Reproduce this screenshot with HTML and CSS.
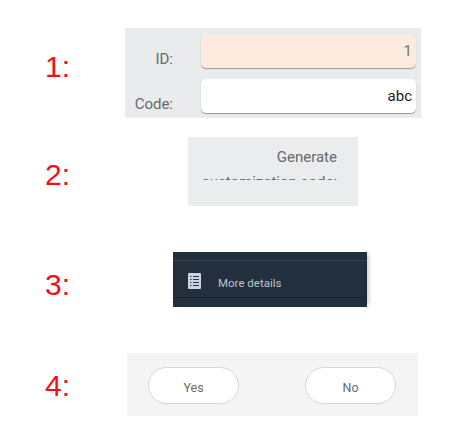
FILE: index.html
```html
<!DOCTYPE html>
<html lang="en">
<head>
    <meta charset="UTF-8">
    <title>Screens</title>
    <link rel="stylesheet" href="styles.css">
</head>
<body>
    <div class="row row-form">
        <div class="num">1:</div>
        <div class="form-panel">
            <div class="field">
                <span class="field-label">ID:</span>
                <div class="input input-id">1</div>
            </div>
            <div class="field">
                <span class="field-label">Code:</span>
                <div class="input input-code">abc</div>
            </div>
        </div>
    </div>

    <div class="row row-generate">
        <div class="num">2:</div>
        <div class="generate-panel">
            <div class="generate-text">Generate<br>customization code:</div>
        </div>
    </div>

    <div class="row row-menu">
        <div class="num">3:</div>
        <div class="menu-panel">
            <div class="menu-item">
                <svg class="menu-icon" viewBox="0 0 13 16">
                    <rect width="13" height="16" rx="1" fill="#c9d3e2"/>
                    <path d="M2 3.5h1.5M5 3.5h6M2 6.5h1.5M5 6.5h6M2 9.5h1.5M5 9.5h6M2 12.5h1.5M5 12.5h6" stroke="#2a3545" stroke-width="1.2"/>
                </svg>
                <span class="menu-label">More details</span>
            </div>
        </div>
    </div>

    <div class="row row-buttons">
        <div class="num">4:</div>
        <div class="buttons-panel">
            <button class="pill">Yes</button>
            <button class="pill">No</button>
        </div>
    </div>
</body>
</html>
```

FILE: styles.css
```css
body {
    margin: 0;
    background: white;
    font-family: Roboto, sans-serif;
}

.row {
    display: flex;
    align-items: flex-start;
}

.num {
    width: 45px;
    margin-left: 45px;
    font-family: "Liberation Sans", sans-serif;
    font-size: 30px;
    line-height: 36px;
    color: #f01018;
}

/* 1: form */
.row-form { margin-top: 28px; }
.row-form .num { margin-top: 21px; }

.form-panel {
    margin-left: 35px;
    width: 296px;
    height: 90px;
    box-sizing: border-box;
    padding: 7px 5px 0 0;
    background: #e9ebed;
    display: flex;
    flex-direction: column;
    gap: 11px;
}

.field {
    display: flex;
    align-items: flex-end;
}

.field-label {
    width: 48px;
    padding-right: 28px;
    text-align: right;
    font-size: 15px;
    line-height: 18px;
    color: #66696c;
}

.input {
    width: 215px;
    height: 33px;
    box-sizing: border-box;
    padding: 0 4px;
    text-align: right;
    font-size: 15px;
    border-radius: 5px;
    box-shadow: 0 1px 1px rgba(0, 0, 0, 0.35);
}

.input-id {
    background: #fdebdf;
    color: #77736f;
    line-height: 33px;
}

.input-code {
    height: 34px;
    background: white;
    color: #222;
    line-height: 35px;
}

/* 2: clipped button label */
.row-generate { margin-top: 19px; }
.row-generate .num { margin-top: 20px; }

.generate-panel {
    margin-left: 98px;
    width: 170px;
    height: 69px;
    box-sizing: border-box;
    padding: 8px 21px 0 0;
    background: #ebecee;
}

.generate-text {
    height: 35px;
    overflow: hidden;
    text-align: right;
    font-size: 15px;
    line-height: 25px;
    color: #66686c;
}

/* 3: dark menu */
.row-menu { margin-top: 46px; }
.row-menu .num { margin-top: 15px; }

.menu-panel {
    margin-left: 83px;
    width: 194px;
    height: 55px;
    box-sizing: border-box;
    padding-top: 8px;
    background: #232f3d;
    box-shadow: 4px 0 4px -2px rgba(0, 0, 0, 0.2);
}

.menu-item {
    height: 36px;
    display: flex;
    align-items: center;
    padding-left: 15px;
    border-top: 1px solid #35414f;
    border-bottom: 1px solid #19222d;
    font-size: 11.5px;
    color: #bcc5d0;
}

.menu-icon {
    width: 13px;
    height: 16px;
    margin-right: 17px;
    margin-top: 3px;
}

.menu-label {
    margin-top: 8px;
}

/* 4: yes / no */
.row-buttons { margin-top: 46px; }
.row-buttons .num { margin-top: 15px; }

.buttons-panel {
    margin-left: 37px;
    width: 291px;
    height: 63px;
    box-sizing: border-box;
    padding: 14px 22px 0 21px;
    background: #f4f4f4;
    display: flex;
    justify-content: space-between;
    align-items: flex-start;
}

.pill {
    width: 91px;
    height: 37px;
    padding: 4px 0 0;
    background: white;
    border: 1px solid #d6d6d6;
    border-radius: 19px;
    font-family: Roboto, sans-serif;
    font-size: 12.5px;
    color: #6a6a6a;
}
```
